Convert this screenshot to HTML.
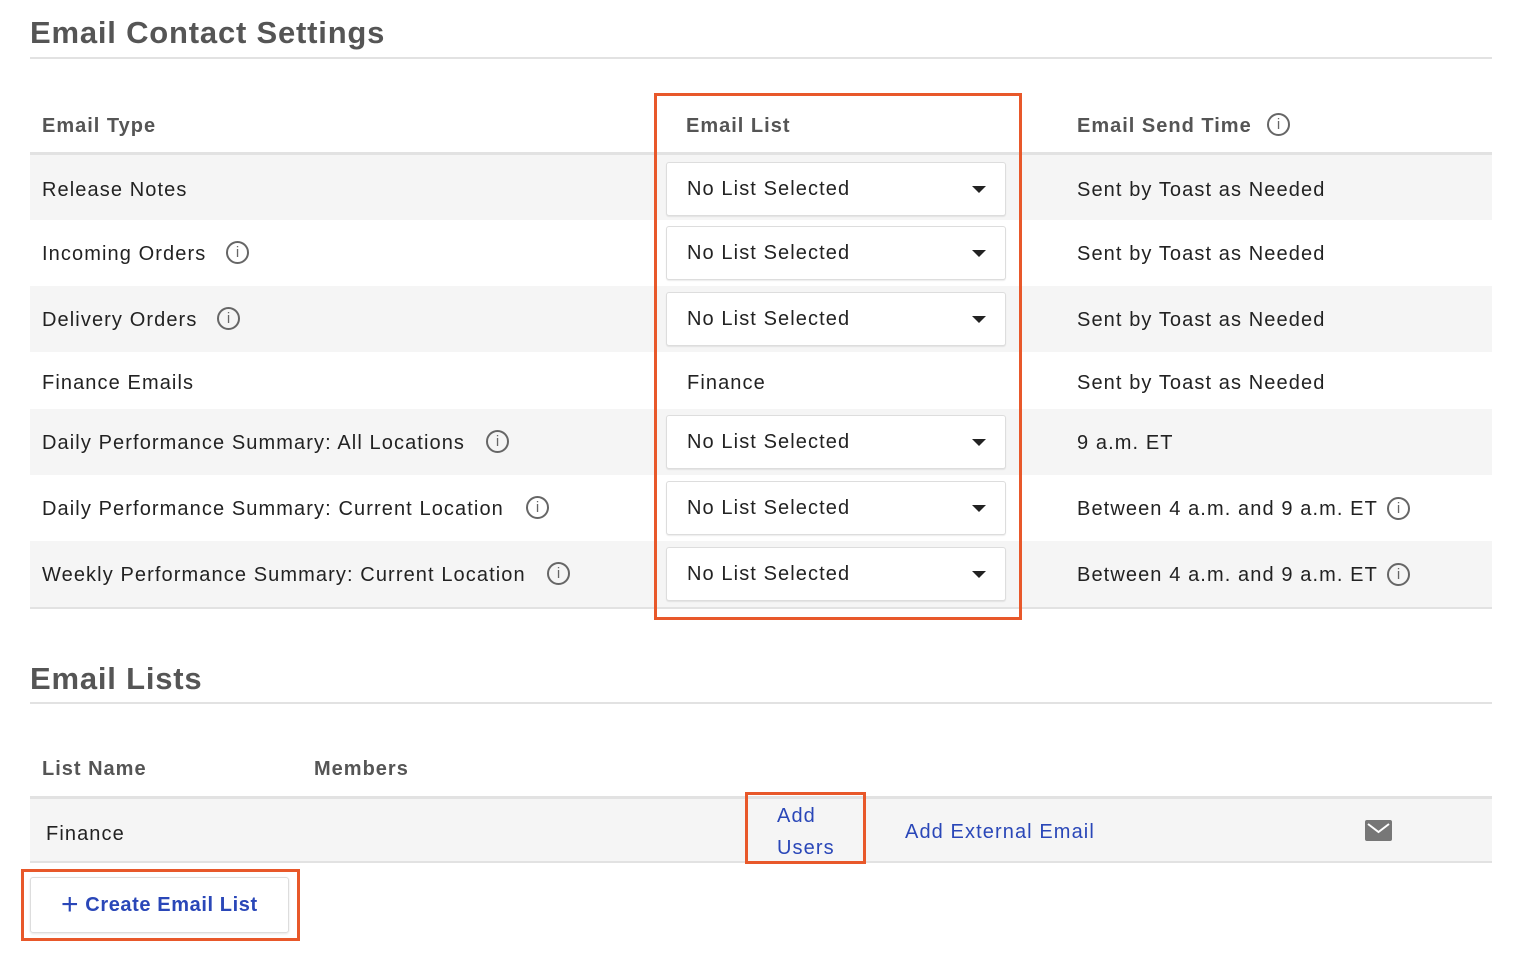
<!DOCTYPE html><html><head><style>
body{margin:0;width:1514px;height:962px;background:#fff;font-family:"Liberation Sans",sans-serif;position:relative;overflow:hidden;color:#222}
.a{position:absolute}
.t{font-size:20px;letter-spacing:1.1px;line-height:24px}
.h{font-weight:bold;color:#555;font-size:20px;line-height:24px;letter-spacing:1px}
.title{font-weight:bold;color:#555;font-size:31px;letter-spacing:0.8px}
.row{position:absolute;left:30px;width:1462px;background:#f5f5f5}
.dd{position:absolute;left:666px;width:338px;height:52px;border:1px solid #ddd;border-radius:3px;background:#fff;box-shadow:0 1px 1px rgba(0,0,0,.08)}
.dd span{position:absolute;left:20px;top:15px;font-size:20px;letter-spacing:1.1px}
.dd i{position:absolute;right:19px;top:23px;border-left:7px solid transparent;border-right:7px solid transparent;border-top:7px solid #222}
.i{position:absolute;width:23px;height:23px;border:2px solid #666;border-radius:50%;box-sizing:border-box;color:#666;font:15px "Liberation Sans",sans-serif;text-align:center;line-height:19px}
.ob{position:absolute;border:3px solid #e8582a;box-sizing:border-box}
.bl{color:#2a47b8}
</style></head><body>
<div class="a title" style="left:30px;top:15px">Email Contact Settings</div>
<div class="a" style="left:30px;top:57px;width:1462px;height:2px;background:#e2e2e2"></div>
<div class="a h" style="left:42px;top:114px">Email Type</div>
<div class="a h" style="left:686px;top:114px">Email List</div>
<div class="a h" style="left:1077px;top:114px">Email Send Time</div>
<div class="i" style="left:1267px;top:113px">i</div>
<div class="a" style="left:30px;top:152px;width:1462px;height:3px;background:#e2e2e2"></div>
<div class="row" style="top:155px;height:65px"></div>
<div class="row" style="top:286px;height:66px"></div>
<div class="row" style="top:409px;height:66px"></div>
<div class="row" style="top:541px;height:66px"></div>
<div class="a" style="left:30px;top:607px;width:1462px;height:2px;background:#e2e2e2"></div>

<div class="a t" style="left:42px;top:178px">Release Notes</div>
<div class="a t" style="left:42px;top:242px">Incoming Orders</div><div class="i" style="left:226px;top:241px">i</div>
<div class="a t" style="left:42px;top:308px">Delivery Orders</div><div class="i" style="left:217px;top:307px">i</div>
<div class="a t" style="left:42px;top:371px">Finance Emails</div>
<div class="a t" style="left:42px;top:431px">Daily Performance Summary: All Locations</div><div class="i" style="left:486px;top:430px">i</div>
<div class="a t" style="left:42px;top:497px">Daily Performance Summary: Current Location</div><div class="i" style="left:526px;top:496px">i</div>
<div class="a t" style="left:42px;top:563px">Weekly Performance Summary: Current Location</div><div class="i" style="left:547px;top:562px">i</div>

<div class="dd" style="top:162px"><span>No List Selected</span><i></i></div>
<div class="dd" style="top:226px"><span>No List Selected</span><i></i></div>
<div class="dd" style="top:292px"><span>No List Selected</span><i></i></div>
<div class="a t" style="left:687px;top:371px">Finance</div>
<div class="dd" style="top:415px"><span>No List Selected</span><i></i></div>
<div class="dd" style="top:481px"><span>No List Selected</span><i></i></div>
<div class="dd" style="top:547px"><span>No List Selected</span><i></i></div>

<div class="a t" style="left:1077px;top:178px">Sent by Toast as Needed</div>
<div class="a t" style="left:1077px;top:242px">Sent by Toast as Needed</div>
<div class="a t" style="left:1077px;top:308px">Sent by Toast as Needed</div>
<div class="a t" style="left:1077px;top:371px">Sent by Toast as Needed</div>
<div class="a t" style="left:1077px;top:431px">9 a.m. ET</div>
<div class="a t" style="left:1077px;top:497px">Between 4 a.m. and 9 a.m. ET</div><div class="i" style="left:1387px;top:497px">i</div>
<div class="a t" style="left:1077px;top:563px">Between 4 a.m. and 9 a.m. ET</div><div class="i" style="left:1387px;top:563px">i</div>

<div class="ob" style="left:654px;top:93px;width:368px;height:527px"></div>

<div class="a title" style="left:30px;top:661px">Email Lists</div>
<div class="a" style="left:30px;top:702px;width:1462px;height:2px;background:#e2e2e2"></div>
<div class="a h" style="left:42px;top:757px">List Name</div>
<div class="a h" style="left:314px;top:757px">Members</div>
<div class="a" style="left:30px;top:796px;width:1462px;height:3px;background:#e2e2e2"></div>
<div class="row" style="top:799px;height:62px"></div>
<div class="a" style="left:30px;top:861px;width:1462px;height:2px;background:#e2e2e2"></div>
<div class="a t" style="left:46px;top:822px">Finance</div>
<div class="a t bl" style="left:777px;top:800px;line-height:32px">Add<br>Users</div>
<div class="a t bl" style="left:905px;top:820px">Add External Email</div>
<svg class="a" style="left:1365px;top:820px" width="27" height="21" viewBox="0 0 27 21"><rect width="27" height="21" rx="2" fill="#777"/><path d="M3 4l10.5 8L24 4" stroke="#fff" stroke-width="2" fill="none"/></svg>
<div class="ob" style="left:745px;top:792px;width:121px;height:72px"></div>

<div class="a" style="left:30px;top:877px;width:259px;height:56px;border:1px solid #ddd;border-radius:3px;box-sizing:border-box;box-shadow:0 1px 2px rgba(0,0,0,.1)"></div>
<div class="a bl" style="left:61px;top:893px;font-size:20px;font-weight:bold;line-height:24px;letter-spacing:0.6px"><span style="font-weight:normal;font-size:30px;vertical-align:-3px">+</span>&nbsp;Create Email List</div>
<div class="ob" style="left:21px;top:869px;width:279px;height:72px"></div>
</body></html>
